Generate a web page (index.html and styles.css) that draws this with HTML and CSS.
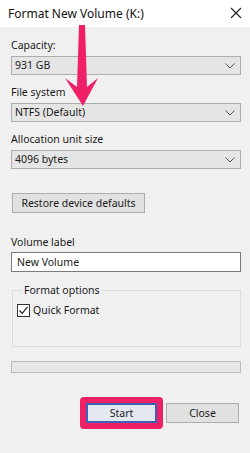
FILE: index.html
```html
<!DOCTYPE html>
<html>
<head>
<meta charset="utf-8">
<title>Format New Volume (K:)</title>
<link rel="stylesheet" href="styles.css">
</head>
<body>
<div class="window">
  <div class="titlebar">
    <span class="title">Format New Volume (K:)</span>
    <svg class="close" width="12" height="12" viewBox="0 0 12 12"><path d="M1 1 L11 11 M11 1 L1 11" stroke="#222" stroke-width="1.1" fill="none"/></svg>
  </div>
  <div class="content">
    <div class="label first">Capacity:</div>
    <div class="combo"><span>931 GB</span><svg class="chev" width="10" height="6" viewBox="0 0 10 6"><path d="M0.5 0.5 L5 5 L9.5 0.5" stroke="#555" stroke-width="1" fill="none"/></svg></div>
    <div class="label">File system</div>
    <div class="combo"><span>NTFS (Default)</span><svg class="chev" width="10" height="6" viewBox="0 0 10 6"><path d="M0.5 0.5 L5 5 L9.5 0.5" stroke="#555" stroke-width="1" fill="none"/></svg></div>
    <div class="label">Allocation unit size</div>
    <div class="combo"><span>4096 bytes</span><svg class="chev" width="10" height="6" viewBox="0 0 10 6"><path d="M0.5 0.5 L5 5 L9.5 0.5" stroke="#555" stroke-width="1" fill="none"/></svg></div>
    <button class="btn restore">Restore device defaults</button>
    <div class="label vol">Volume label</div>
    <div class="textfield">New Volume</div>
    <fieldset class="group">
      <legend>Format options</legend>
      <div class="check-row">
        <span class="checkbox"><svg width="11" height="11" viewBox="0 0 11 11"><path d="M1.5 5.5 L4.2 8.3 L9.6 1.8" stroke="#222" stroke-width="1.2" fill="none"/></svg></span>
        <span>Quick Format</span>
      </div>
    </fieldset>
    <div class="progress"></div>
    <div class="actions">
      <span class="ring"><button class="btn start">Start</button></span>
      <button class="btn close-btn">Close</button>
    </div>
  </div>
  <svg class="arrow" width="40" height="90" viewBox="62 22 40 90"><path d="M79 25 L85 25 L87 87 L98 78 L83 106 L65 78 L77 87 Z" fill="#ef2067"/></svg>
</div>
</body>
</html>
```
FILE: styles.css
```css
html, body {
  margin: 0;
  padding: 0;
}
body {
  background: #f0f0f0;
  font-family: "Noto Sans", "Open Sans", sans-serif;
  font-size: 10.5px;
  color: #1a1a1a;
}
.window {
  position: relative;
  width: 250px;
  height: 453px;
  overflow: hidden;
}
.titlebar {
  height: 27px;
  background: #fff;
  display: flex;
  align-items: center;
  justify-content: space-between;
  padding: 0 8px 1px 8px;
  box-sizing: border-box;
}
.title {
  font-size: 12px;
  color: #111;
}
.content {
  padding: 0 9px 0 11px;
  display: flex;
  flex-direction: column;
  align-items: stretch;
}
.label {
  height: 14px;
  line-height: 14px;
  margin-top: 10px;
  margin-bottom: 4px;
}
.label.first {
  margin-top: 11px;
}
.combo {
  height: 19px;
  box-sizing: border-box;
  border: 1px solid #adadad;
  background: #e5e5e5;
  display: flex;
  align-items: center;
  justify-content: space-between;
  padding: 0 5px 0 3px;
  line-height: 17px;
}
.btn {
  font-family: inherit;
  font-size: 10.5px;
  color: #1a1a1a;
  background: #e1e1e1;
  border: 1px solid #adadad;
  height: 20px;
  box-sizing: border-box;
  padding: 0;
  margin: 0;
  line-height: 18px;
}
.restore {
  align-self: flex-start;
  margin: 24px 0 0 1px;
  width: 133px;
}
.label.vol {
  margin-top: 22px;
  margin-bottom: 3px;
}
.textfield {
  height: 20px;
  box-sizing: border-box;
  border: 1px solid #7a7a7a;
  background: #fff;
  padding-left: 5px;
  line-height: 18px;
}
.group {
  margin: 11px 0 0 1px;
  border: 1px solid #dcdcdc;
  padding: 6px 0 0 4px;
  height: 64px;
  box-sizing: border-box;
}
.group legend {
  padding: 0 2px;
  margin-left: 5px;
  line-height: 14px;
}
.check-row {
  display: flex;
  align-items: center;
  gap: 3px;
  height: 14px;
}
.checkbox {
  width: 13px;
  height: 13px;
  box-sizing: border-box;
  border: 1px solid #333;
  background: #fff;
  display: flex;
  align-items: center;
  justify-content: center;
}
.progress {
  margin-top: 14px;
  height: 12px;
  box-sizing: border-box;
  border: 1px solid #bcbcbc;
  background: #e6e6e6;
}
.actions {
  margin-top: 24px;
  display: flex;
  justify-content: flex-end;
  align-items: center;
  gap: 3px;
  padding-right: 2px;
}
.ring {
  display: flex;
  padding: 6px;
  background: #ee2066;
  border-radius: 4px;
}
.start {
  width: 71px;
  border: 2px solid #3f5fb6;
  background: #e4e9f1;
  line-height: 16px;
}
.close-btn {
  width: 73px;
}
.arrow {
  position: absolute;
  left: 62px;
  top: 22px;
}
```
